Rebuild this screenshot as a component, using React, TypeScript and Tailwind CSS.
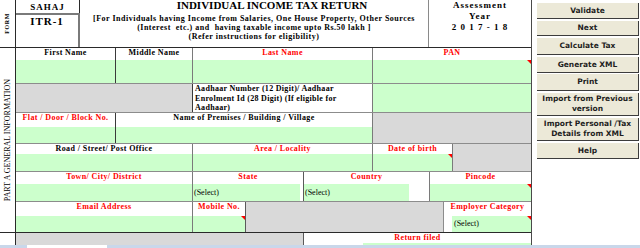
import type { ReactNode } from 'react';

const serif = "font-['Liberation_Serif',serif]";

function Mark() {
  return (
    <span className="absolute right-0 top-0 h-0 w-0 border-l-[4px] border-t-[4px] border-l-transparent border-t-[#ff0000]" />
  );
}

type FieldProps = {
  label: string;
  red?: boolean;
  className: string;
  labelClass: string;
  mark?: boolean;
  children?: ReactNode;
};

function Field({ label, red, className, labelClass, mark, children }: FieldProps) {
  return (
    <div className={`flex flex-col ${className}`}>
      <div
        className={`${labelClass} flex justify-center overflow-hidden whitespace-nowrap text-[8px] font-bold leading-[10px] tracking-[0.4px] ${
          red ? 'text-[#ff0000]' : 'text-black'
        }`}
      >
        {label}
      </div>
      {children ?? <div className="relative flex-1 bg-[#ccffcc]">{mark && <Mark />}</div>}
    </div>
  );
}

function SelectBox({ className, mark }: { className: string; mark?: boolean }) {
  return (
    <div className={`relative flex items-center bg-[#ccffcc] pl-[1px] text-[8px] leading-[10px] text-black ${className}`}>
      (Select)
      {mark && <Mark />}
    </div>
  );
}

const buttons = [
  { lines: ['Validate'], cls: 'mt-[3px] h-[16px]' },
  { lines: ['Next'], cls: 'mt-[2px] h-[15px]' },
  { lines: ['Calculate Tax'], cls: 'mt-[2px] h-[17px]' },
  { lines: ['Generate XML'], cls: 'mt-[2px] h-[16px]' },
  { lines: ['Print'], cls: 'mt-[1px] h-[17px]' },
  { lines: ['Import from Previous', 'version'], cls: 'mt-[2px] h-[23px]' },
  { lines: ['Import Personal /Tax', 'Details from XML'], cls: 'mt-[2px] h-[23px]' },
  { lines: ['Help'], cls: 'mt-[2px] h-[16px]' },
];

export default function App() {
  return (
    <div className={`flex h-[248px] w-[640px] flex-col overflow-hidden bg-white ${serif}`}>
      <div className="flex h-[245px]">
        {/* form sheet */}
        <div className="flex w-[532px] flex-col border-r border-[#4a4a4a]">
          {/* header */}
          <div className="flex h-[48px] border-b border-[#2a2a2a]">
            <div className="flex w-[16px] items-center justify-center border-r border-[#2a2a2a]">
              <span className="rotate-180 text-[6px] font-bold tracking-[0.6px] [writing-mode:vertical-rl]">FORM</span>
            </div>
            <div className="flex w-[64px] flex-col">
              <div className="h-[13px] border-r border-[#2a2a2a] pt-[2px] text-center text-[9px] font-bold leading-[10px] tracking-[1px]">
                SAHAJ
              </div>
              <div className="flex-1 border-r-2 border-t-2 border-[#7a7a7a] text-center text-[11px] font-bold leading-[12px] tracking-[1px]">
                ITR-1
              </div>
            </div>
            <div className="flex w-[349px] flex-col items-center border-r border-[#8a8a8a] text-center">
              <div className="h-[14px] pl-[36px] text-[11px] font-bold leading-[11px]">INDIVIDUAL INCOME TAX RETURN</div>
              <div className="whitespace-nowrap text-[8px] font-bold leading-[9px] tracking-[0.5px]">
                [For Individuals having Income from Salaries, One House Property, Other Sources
                <br />
                (Interest&nbsp; etc.) and&nbsp; having taxable income upto Rs.50 lakh ]
                <br />
                (Refer instructions for eligibility)
              </div>
            </div>
            <div className="flex-1 text-center text-[9px] font-bold leading-[11px] tracking-[1px]">
              Assessment
              <br />
              Year
              <br />2 0 1 7 - 1 8
            </div>
          </div>

          {/* part A body */}
          <div className="flex h-[185px] border-b border-[#2a2a2a]">
            <div className="flex w-[16px] items-center justify-center border-r border-[#2a2a2a]">
              <span className="rotate-180 whitespace-nowrap text-[8px] leading-[9px] [writing-mode:vertical-rl]">
                PART A GENERAL INFORMATION
              </span>
            </div>
            <div className="flex flex-1 flex-col">
              <div className="flex h-[36px] border-b border-[#8c8c8c]">
                <Field label="First Name" className="w-[100px] border-r border-[#3a3a3a]" labelClass="h-[12px]" />
                <Field label="Middle Name" className="w-[77px] border-r border-[#7a7a7a]" labelClass="h-[12px]" />
                <Field label="Last Name" red className="w-[180px] border-r border-[#7a7a7a]" labelClass="h-[12px]" />
                <Field label="PAN" red mark className="flex-1" labelClass="h-[12px]" />
              </div>

              <div className="flex h-[29px] border-b border-[#8c8c8c]">
                <div className="w-[177px] border-r border-[#3a3a3a] bg-[#d9d9d9]" />
                <div className="w-[180px] overflow-hidden whitespace-nowrap border-r border-[#7a7a7a] pl-[2px] text-[8px] font-bold leading-[9.5px] tracking-[0.3px]">
                  Aadhaar Number (12 Digit)/ Aadhaar
                  <br />
                  Enrolment Id (28 Digit) (If eligible for
                  <br />
                  Aadhaar)
                </div>
                <div className="flex-1 bg-[#ccffcc]" />
              </div>

              <div className="flex h-[31px] border-b border-[#8c8c8c]">
                <Field label="Flat / Door / Block No." red className="w-[100px] border-r border-[#3a3a3a]" labelClass="h-[14px]" />
                <Field label="Name of Premises / Building / Village" className="w-[257px] border-r border-[#7a7a7a]" labelClass="h-[14px]" />
                <div className="flex-1 bg-[#d9d9d9]" />
              </div>

              <div className="flex h-[28px] border-b border-[#8c8c8c]">
                <Field label="Road / Street/ Post Office" className="w-[177px] border-r border-[#7a7a7a]" labelClass="h-[10px]" />
                <Field label="Area / Locality" red className="w-[180px] border-r border-[#7a7a7a]" labelClass="h-[10px]" />
                <Field label="Date of birth" red mark className="w-[80px] border-r border-[#7a7a7a]" labelClass="h-[10px]" />
                <div className="flex-1 bg-[#d9d9d9]" />
              </div>

              <div className="flex h-[30px] border-b border-[#8c8c8c]">
                <Field label="Town/ City/ District" red className="w-[177px] border-r border-[#7a7a7a]" labelClass="h-[12px]" />
                <Field label="State" red className="w-[111px] border-r border-[#5a5a5a]" labelClass="h-[12px]">
                  <SelectBox className="w-[107px] flex-1" />
                </Field>
                <Field label="Country" red className="w-[126px] border-r border-[#7a7a7a]" labelClass="h-[12px]">
                  <SelectBox className="w-[105px] flex-1" />
                </Field>
                <Field label="Pincode" red mark className="flex-1" labelClass="h-[12px]" />
              </div>

              <div className="flex h-[30px]">
                <Field label="Email Address" red className="w-[177px] border-r border-[#7a7a7a]" labelClass="h-[14px]" />
                <Field label="Mobile No." red mark className="w-[53px] border-r border-[#5a5a5a]" labelClass="h-[14px]" />
                <div className="w-[198px] border-r border-[#8c8c8c] bg-[#d9d9d9]" />
                <Field label="Employer Category" red className="flex-1" labelClass="h-[14px]">
                  <SelectBox mark className="ml-[8px] flex-1 pl-[2px]" />
                </Field>
              </div>
            </div>
          </div>

          {/* last row */}
          <div className="flex flex-1">
            <div className="w-[16px] border-r border-[#2a2a2a]" />
            <div className="w-[288px] border-r border-[#5a5a5a] bg-[#d9d9d9]" />
            <Field label="Return filed" red className="flex-1" labelClass="h-[10px]">
              <div className="ml-[59px] flex-1 bg-[#ccffcc]" />
            </Field>
          </div>
        </div>

        {/* buttons */}
        <div className="flex flex-col pl-[5px] font-['DejaVu_Sans',sans-serif]">
          {buttons.map((b) => (
            <div
              key={b.lines[0]}
              className={`flex w-[102px] flex-col items-center justify-center border-b border-r border-[#3c3c3c] bg-[#ece9d8] text-[7.5px] font-bold leading-[10px] text-[#1e1e1e] ${b.cls}`}
            >
              {b.lines.map((l) => (
                <span key={l} className="whitespace-nowrap">
                  {l}
                </span>
              ))}
            </div>
          ))}
        </div>
      </div>

      {/* sheet tab strip */}
      <div className="flex h-[3px] bg-[#c9d7ea]">
        <div className="ml-[27px] w-[80px] bg-white" />
      </div>
    </div>
  );
}
